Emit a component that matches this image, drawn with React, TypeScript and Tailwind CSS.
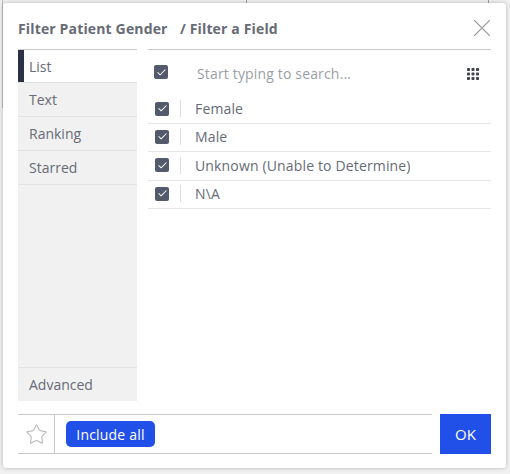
import React from 'react';
import { Check, X, Star } from 'lucide-react';

const tabs = ['Text', 'Ranking', 'Starred'];
const rows = [
  { label: 'Female', h: 'h-[28px]' },
  { label: 'Male', h: 'h-[28px]' },
  { label: 'Unknown (Unable to Determine)', h: 'h-[29px]' },
  { label: 'N\\A', h: 'h-[28px]' },
];

const CheckBox: React.FC<{ className?: string }> = ({ className }) => (
  <span className={`w-[14px] h-[14px] rounded-[2px] bg-[#535a6b] flex items-center justify-center shrink-0 ${className ?? ''}`}>
    <Check className="w-[11px] h-[11px] text-white" strokeWidth={2.2} />
  </span>
);

const GridIcon = () => (
  <svg width="12" height="12" viewBox="0 0 12 12" fill="#3f4450" className="mt-[2px]">
    {[0, 4.5, 9].map(y =>
      [0, 4.5, 9].map(x => <rect key={`${x}-${y}`} x={x} y={y} width="3" height="3" rx="0.8" />)
    )}
  </svg>
);

export default function App() {
  return (
    <div className="relative w-[510px] h-[474px] bg-[#f1f1f1] pt-[3px] pl-[3px] font-['Open_Sans',sans-serif] overflow-hidden">
      {/* bits of the page behind the modal */}
      <div className="absolute left-[2px] top-0 w-px h-[108px] bg-[#bdbdbd]" />
      <div className="absolute left-[246px] top-0 w-px h-[3px] bg-[#9a9a9a]" />
      <div className="absolute left-[488px] top-0 w-px h-[3px] bg-[#9a9a9a]" />

      <div className="relative w-[503px] h-[465px] bg-white rounded-[3px] shadow-[0_0_4px_rgba(0,0,0,0.25)] px-[15px] flex flex-col">
        {/* Header */}
        <div className="h-[46px] pt-[4px] flex items-center justify-between shrink-0">
          <div className="text-[14px] font-bold text-[#666b76] tracking-[0.15px] whitespace-pre">
            Filter Patient Gender{'   '}<span className="ml-[1px]">/ Filter a Field</span>
          </div>
          <X className="w-[30px] h-[30px] text-[#a0a0a0] mr-[-6px]" strokeWidth={0.9} />
        </div>

        {/* Body */}
        <div className="flex gap-[11px] h-[352px] shrink-0">
          <div className="w-[119px] bg-[#f1f1f1] border-t border-[#c9c9c9] flex flex-col text-[14px] text-[#666b76]">
            <div className="h-[32px] bg-white border-l-[6px] border-[#2b3245] pl-[5px] flex items-center">List</div>
            {tabs.map(t => (
              <div key={t} className="h-[34px] border-t border-[#e2e2e2] pl-[11px] flex items-center">{t}</div>
            ))}
            <div className="h-[34px] border-t border-[#e2e2e2]" />
            <div className="mt-auto h-[34px] border-t border-[#e2e2e2] pl-[11px] flex items-center">Advanced</div>
          </div>

          <div className="flex-1 border-t border-[#c9c9c9]">
            <div className="h-[46px] flex items-center pl-[6px] pr-[12px]">
              <CheckBox className="mb-[2px]" />
              <span className="ml-[29px] text-[14px] text-[#9a9ea6] tracking-[0.16px] flex-1">Start typing to search...</span>
              <GridIcon />
            </div>
            {rows.map(r => (
              <div key={r.label} className={`${r.h} border-b border-[#e6e6e6] flex items-center pl-[7px] pb-[2px] text-[14px] text-[#666b76] tracking-[0.15px]`}>
                <CheckBox />
                <span className="ml-[11px] w-px h-[17px] bg-[#dedede]" />
                <span className="ml-[14px]">{r.label}</span>
              </div>
            ))}
          </div>
        </div>

        {/* Footer */}
        <div className="mt-[13px] flex gap-[8px] h-[40px] shrink-0">
          <div className="w-[414px] border-y border-[#c9c9c9] flex items-center">
            <div className="w-[37px] h-full border-r border-[#c9c9c9] flex items-center justify-center">
              <Star className="w-[23px] h-[23px] text-[#c0c0c0]" strokeWidth={1.3} />
            </div>
            <span className="ml-[11px] h-[26px] w-[89px] rounded-[5px] bg-[#2150e8] text-white text-[14px] font-medium tracking-[0.2px] flex items-center justify-center">
              Include all
            </span>
          </div>
          <button className="w-[51px] h-[40px] bg-[#2150e8] text-white text-[15px] font-medium">OK</button>
        </div>
      </div>
    </div>
  );
}
